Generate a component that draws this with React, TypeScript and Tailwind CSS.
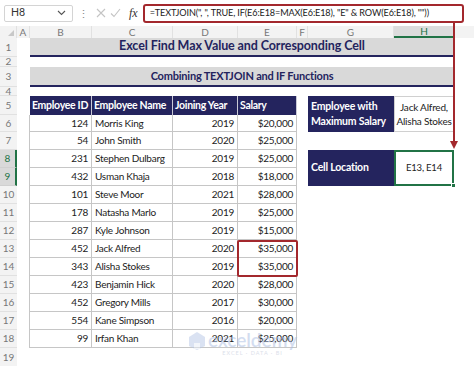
import React from 'react';

const employees: [number, string, number, string][] = [
  [124, 'Morris King', 2019, '$20,000'],
  [54, 'John Smith', 2020, '$25,000'],
  [231, 'Stephen Dulbarg', 2019, '$25,000'],
  [432, 'Usman Khaja', 2018, '$18,000'],
  [101, 'Steve Moor', 2021, '$28,000'],
  [178, 'Natasha Marlo', 2019, '$25,000'],
  [287, 'Kyle Johnson', 2019, '$15,000'],
  [452, 'Jack Alfred', 2020, '$35,000'],
  [343, 'Alisha Stokes', 2019, '$35,000'],
  [423, 'Benjamin Hick', 2020, '$28,000'],
  [452, 'Gregory Mills', 2017, '$30,000'],
  [554, 'Kane Simpson', 2016, '$20,000'],
  [99, 'Irfan Khan', 2021, '$25,000'],
];

const rowHead = 'bg-[#f3f3f3] border-b border-[#e1e1e1] text-[10px] text-[#777] flex items-center justify-center';
const rowHeadSel = 'bg-[#d9d9d9] border-b border-[#d0d0d0] border-r-2 border-r-[#217346] text-[10px] text-[#217346] flex items-center justify-center';
const colHead = 'bg-[#f3f3f3] border-r border-[#e1e1e1] text-[10px] text-[#777] flex items-center justify-center';
const th = 'bg-[#24245e] text-white font-bold text-[10.5px] tracking-[-0.3px] flex items-center px-[2px] border-r border-[#c9c9d6] whitespace-nowrap overflow-hidden';
const td = 'border-r border-b border-[#c6c6c6] text-[10px] tracking-[-0.25px] text-[#222] flex items-center px-[3px] whitespace-nowrap';

function FormulaBar() {
  return (
    <div className="h-[26px] flex items-center bg-white">
      <div className="ml-[4px] w-[69px] h-[17px] border border-[#d4d4d4] rounded-[2px] flex items-center justify-between px-[6px] text-[10.5px] text-[#333]">
        <span>H8</span>
        <svg width="9" height="6" viewBox="0 0 9 6">
          <path d="M1 1l3.5 3.5L8 1" fill="none" stroke="#555" strokeWidth="1.1" />
        </svg>
      </div>
      <span className="ml-[5px] text-[#888] text-[11px] leading-none">⋮</span>
      <svg className="ml-[7px]" width="10" height="10" viewBox="0 0 10 10">
        <path d="M1 1l8 8M9 1L1 9" stroke="#c4c4c4" strokeWidth="1.1" />
      </svg>
      <svg className="ml-[4px]" width="11" height="10" viewBox="0 0 11 10">
        <path d="M1 5.5l3 3L10 1" fill="none" stroke="#c4c4c4" strokeWidth="1.1" />
      </svg>
      <span className="ml-[8px] text-[12px] italic text-[#333] font-['Liberation_Serif',serif]">fx</span>
      <div className="ml-[5px] mr-[10px] flex-1 h-[19px] border-2 border-[#a3282d] rounded-[3px] flex items-center pl-[5px] text-[9.1px] tracking-[-0.12px] text-[#222] whitespace-nowrap overflow-hidden">
        =TEXTJOIN(", ", TRUE, IF(E6:E18=MAX(E6:E18), "E" &amp; ROW(E6:E18), ""))
      </div>
    </div>
  );
}

export default function App() {
  return (
    <div className="relative w-[474px] h-[366px] overflow-hidden bg-white font-['Lato','Liberation_Sans',sans-serif]">
      <FormulaBar />
      <div className="grid grid-cols-[17px_13px_62px_81px_65px_59px_11px_86px_60px_1fr] grid-rows-[12px_19px_10px_20px_9px_19px_17px_repeat(12,18px)_19px]">
        {/* column headers */}
        <div className="bg-[#f3f3f3] border-r border-[#e1e1e1] flex items-end justify-end p-[2px]">
          <svg width="6" height="6" viewBox="0 0 6 6"><path d="M6 0V6H0z" fill="#c8c8c8" /></svg>
        </div>
        {['A', 'B', 'C', 'D', 'E', 'F', 'G'].map((c) => (
          <div key={c} className={colHead}>{c}</div>
        ))}
        <div className="bg-[#dcdcdc] border-b-2 border-[#217346] text-[10px] text-[#217346] flex items-center justify-center">H</div>
        <div className="bg-[#f3f3f3]" />

        {/* row 1 */}
        <div className={rowHead}>1</div>
        <div />
        <div className="col-span-7 bg-[#d9d9d9] border-b-2 border-[#24245e] flex items-center justify-center text-[12.5px] tracking-[-0.1px] font-bold text-[#24245e]">
          Excel Find Max Value and Corresponding Cell
        </div>
        <div />

        {/* row 2 */}
        <div className={rowHead}>2</div>
        <div className="col-span-9" />

        {/* row 3 */}
        <div className={rowHead}>3</div>
        <div />
        <div className="col-span-7 bg-[#d9d9d9] border-b-2 border-[#24245e] flex items-center justify-center text-[11px] tracking-[-0.2px] font-bold text-[#24245e]">
          Combining TEXTJOIN and IF Functions
        </div>
        <div />

        {/* row 4 */}
        <div className={rowHead}>4</div>
        <div className="col-span-9" />

        {/* row 5 */}
        <div className={rowHead}>5</div>
        <div />
        <div className={th}>Employee ID</div>
        <div className={th}>Employee Name</div>
        <div className={th}>Joining Year</div>
        <div className={th}>Salary</div>
        <div />
        <div className="row-span-2 bg-[#24245e] text-white font-bold text-[10.5px] tracking-[-0.2px] leading-[15px] flex flex-col justify-center pl-[3px]">
          <span>Employee with</span>
          <span>Maximum Salary</span>
        </div>
        <div className="row-span-2 border border-[#d0d0d0] text-[10px] tracking-[-0.2px] leading-[14px] text-[#222] flex flex-col items-center justify-center">
          <span>Jack Alfred,</span>
          <span>Alisha Stokes</span>
        </div>
        <div />

        {employees.map(([id, name, year, salary], i) => {
          const r = i + 6;
          return (
            <React.Fragment key={r}>
              <div className={r === 8 || r === 9 ? rowHeadSel : rowHead}>{r}</div>
              <div className="border-r border-[#c6c6c6]" />
              <div className={td + ' justify-end'}>{id}</div>
              <div className={td}>{name}</div>
              <div className={td + ' justify-end'}>{year}</div>
              <div className={td + ' justify-end'}>{salary}</div>
              <div />
              {r === 7 && <div />}
              {r === 7 && <div />}
              {r === 8 && (
                <div className="row-span-2 bg-[#24245e] text-white font-bold text-[10.5px] tracking-[-0.2px] flex items-center pl-[3px]">
                  Cell Location
                </div>
              )}
              {r === 8 && (
                <div className="row-span-2 relative border-2 border-[#217346] text-[9.5px] tracking-[-0.2px] text-[#222] flex items-center justify-center">
                  E13, E14
                  <div className="absolute right-[-4px] bottom-[-4px] w-[5px] h-[5px] bg-[#217346] border border-white" />
                </div>
              )}
              {r > 9 && <div />}
              {r > 9 && <div />}
              <div />
            </React.Fragment>
          );
        })}

        {/* row 19 */}
        <div className={rowHead}>19</div>
        <div className="col-span-9" />
      </div>

      {/* annotations */}
      <div className="absolute left-[237px] top-[240px] w-[61px] h-[37px] border-2 border-[#a3282d] rounded-[2px]" />
      <div className="absolute left-[453px] top-[22px] w-[2px] h-[120px] bg-[#a3282d]" />
      <svg className="absolute left-[450px] top-[141px]" width="8" height="8" viewBox="0 0 8 8">
        <path d="M0 0H8L4 8z" fill="#a3282d" />
      </svg>

      {/* watermark */}
      <div className="absolute left-[188px] top-[331px] flex items-start gap-[2px] opacity-50 pointer-events-none">
        <svg width="18" height="20" viewBox="0 0 18 20">
          <path d="M9 1L17 6v9l-8 4-8-4V6z" fill="#b6c6e6" />
          <path d="M6 12h6v6H6z" fill="#e6ecf7" />
        </svg>
        <div className="flex flex-col items-center">
          <span className="text-[19px] leading-[18px] text-[#a9bce3] font-semibold">exceldemy</span>
          <span className="text-[5.5px] tracking-[1px] text-[#b9c3d6]">EXCEL · DATA · BI</span>
        </div>
      </div>
    </div>
  );
}
